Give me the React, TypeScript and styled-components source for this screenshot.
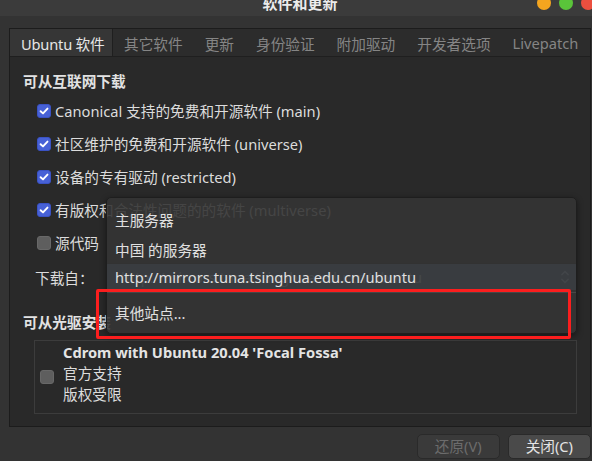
import { createGlobalStyle, styled } from "styled-components";

const GlobalStyle = createGlobalStyle`
  body {
    margin: 0;
    background: #333333;
    overflow: hidden;
    font-family: "Noto Sans", "Noto Sans CJK SC", sans-serif;
    font-size: 14.67px;
    color: #dcdcdc;
  }
  * {
    box-sizing: border-box;
  }
`;

const Window = styled.div`
  position: relative;
  width: 600px;
  height: 461px;
  background: #333333;
  display: flex;
  flex-direction: column;
  overflow: hidden;
`;

const TitleBar = styled.header`
  flex: none;
  height: 16px;
  background: #3b3b3b;
  display: grid;
  grid-template-columns: 1fr auto 1fr;
  align-items: start;
  overflow: hidden;
`;

const Title = styled.div`
  grid-column: 2;
  margin-top: -6px;
  font-size: 15px;
  line-height: 18px;
  font-weight: bold;
  color: #ececec;
`;

const Controls = styled.div`
  grid-column: 3;
  justify-self: end;
  display: flex;
  gap: 8px;
  margin-top: -4px;
  margin-right: 5px;
`;

const Dot = styled.span<{ $color: string }>`
  width: 14px;
  height: 14px;
  border-radius: 50%;
  background: ${(p) => p.$color};
`;

const Body = styled.main`
  flex: 1;
  display: flex;
  flex-direction: column;
  padding: 12px 9px 0;
`;

const Notebook = styled.section`
  height: 399px;
  border: 1px solid #1c1c1c;
  display: flex;
  flex-direction: column;
  background: #292929;
`;

const TabBar = styled.nav`
  flex: none;
  height: 28px;
  display: flex;
  background: #2c2c2c;
  border-bottom: 1px solid #1f1f1f;
  white-space: nowrap;
  overflow: hidden;
`;

const Tab = styled.div<{ $active?: boolean }>`
  flex: none;
  display: flex;
  align-items: center;
  padding: 1px 11px 0;
  width: ${(p) => (p.$active ? "103px" : "auto")};
  color: ${(p) => (p.$active ? "#e6e6e6" : "#858585")};
  background: ${(p) => (p.$active ? "#363636" : "transparent")};
  border-right: ${(p) => (p.$active ? "1px solid #1f1f1f" : "none")};
  letter-spacing: ${(p) => (p.$active ? "-0.2px" : "0")};
`;

const Panel = styled.div`
  flex: 1;
  display: flex;
  flex-direction: column;
  padding: 13px 13px 0 13px;
`;

const Heading = styled.div<{ $top?: number }>`
  line-height: 22px;
  font-weight: bold;
  color: #e2e2e2;
  margin-top: ${(p) => p.$top ?? 0}px;
  margin-bottom: 2px;
`;

const CheckRow = styled.label`
  height: 33px;
  display: flex;
  align-items: center;
  gap: 4px;
  padding-left: 14px;
  white-space: nowrap;
`;

const Box = styled.span<{ $checked?: boolean }>`
  flex: none;
  width: 14px;
  height: 14px;
  border-radius: 3px;
  display: flex;
  align-items: center;
  justify-content: center;
  background: ${(p) => (p.$checked ? "#4761d6" : "#5e5e5e")};
  border: 1px solid ${(p) => (p.$checked ? "#3a52c4" : "#686868")};
`;

const SourceRow = styled.div`
  height: 36px;
  display: flex;
  align-items: center;
  padding-left: 12px;
`;

const SourceLabel = styled.span`
  width: 71px;
  flex: none;
`;

const Combo = styled.div`
  flex: 1;
  height: 28px;
  display: flex;
  align-items: center;
  justify-content: space-between;
  padding: 0 6px 0 14px;
  background: #343434;
  border: 1px solid #1f1f1f;
  border-radius: 4px;
`;

const CdFrame = styled.div`
  margin: 5px 0 0 11px;
  height: 74px;
  border: 1px solid #3c3c3c;
  display: flex;
  align-items: center;
  gap: 9px;
  padding-left: 5px;
`;

const CdLines = styled.div`
  align-self: flex-start;
  padding-top: 1px;
  display: flex;
  flex-direction: column;
`;

const CdLine = styled.div<{ $bold?: boolean }>`
  height: 21px;
  line-height: 21px;
  font-weight: ${(p) => (p.$bold ? "bold" : "normal")};
  color: ${(p) => (p.$bold ? "#e4e4e4" : "#dcdcdc")};
`;

const Footer = styled.footer`
  display: flex;
  justify-content: flex-end;
  gap: 8px;
  padding-top: 7px;
`;

const Button = styled.button<{ $disabled?: boolean }>`
  height: 25px;
  padding: 0 17px;
  border-radius: 5px;
  font: inherit;
  line-height: 23px;
  border: 1px solid #2a2a2a;
  background: ${(p) => (p.$disabled ? "#3a3a3a" : "#4a4a4a")};
  color: ${(p) => (p.$disabled ? "#6c6c6c" : "#e4e4e4")};
`;

const Popup = styled.div`
  position: absolute;
  left: 106px;
  top: 197px;
  width: 471px;
  height: 137px;
  padding-top: 7px;
  background: rgba(52, 52, 52, 0.9);
  border: 1px solid #1e1e1e;
  border-radius: 5px;
  box-shadow: 0 2px 6px rgba(0, 0, 0, 0.45);
  display: flex;
  flex-direction: column;
`;

const MenuItem = styled.div<{ $h: number; $hover?: boolean }>`
  height: ${(p) => p.$h}px;
  display: flex;
  align-items: center;
  padding-left: 8px;
  color: #e0e0e0;
  background: ${(p) => (p.$hover ? "rgba(70, 76, 88, 0.35)" : "transparent")};
`;

const Separator = styled.div`
  height: 1px;
  margin-top: 2px;
  background: #474747;
`;

const Highlight = styled.div`
  position: absolute;
  left: 96px;
  top: 289px;
  width: 475px;
  height: 50px;
  border: 3px solid #fb1e1e;
  border-radius: 2px;
`;

function Check({ checked }: { checked?: boolean }) {
  return (
    <Box $checked={checked}>
      {checked && (
        <svg width="10" height="10" viewBox="0 0 10 10">
          <path
            d="M1.6 5.2 L4 7.4 L8.5 2.6"
            fill="none"
            stroke="#ffffff"
            strokeWidth="1.9"
            strokeLinecap="round"
            strokeLinejoin="round"
          />
        </svg>
      )}
    </Box>
  );
}

const tabs = ["Ubuntu 软件", "其它软件", "更新", "身份验证", "附加驱动", "开发者选项", "Livepatch"];

const sources = [
  { text: "Canonical 支持的免费和开源软件 (main)", checked: true },
  { text: "社区维护的免费和开源软件 (universe)", checked: true },
  { text: "设备的专有驱动 (restricted)", checked: true },
  { text: "有版权和合法性问题的的软件 (multiverse)", checked: true },
  { text: "源代码", checked: false },
];

export default function App() {
  return (
    <>
      <GlobalStyle />
      <Window>
        <TitleBar>
          <Title>软件和更新</Title>
          <Controls>
            <Dot $color="#f4a51f" />
            <Dot $color="#5ac43a" />
            <Dot $color="#ec4f3f" />
          </Controls>
        </TitleBar>
        <Body>
          <Notebook>
            <TabBar>
              {tabs.map((t, i) => (
                <Tab key={t} $active={i === 0}>
                  {t}
                </Tab>
              ))}
            </TabBar>
            <Panel>
              <Heading>可从互联网下载</Heading>
              {sources.map((s) => (
                <CheckRow key={s.text}>
                  <Check checked={s.checked} />
                  {s.text}
                </CheckRow>
              ))}
              <SourceRow>
                <SourceLabel>下载自：</SourceLabel>
                <Combo>
                  <span>http://mirrors.tuna.tsinghua.edu.cn/ubuntu</span>
                  <svg width="10" height="16" viewBox="0 0 10 16">
                    <path
                      d="M1.5 6 L5 2.5 L8.5 6 M1.5 10 L5 13.5 L8.5 10"
                      fill="none"
                      stroke="#bbbbbb"
                      strokeWidth="1.3"
                    />
                  </svg>
                </Combo>
              </SourceRow>
              <Heading $top={16}>可从光驱安装</Heading>
              <CdFrame>
                <Check />
                <CdLines>
                  <CdLine $bold>Cdrom with Ubuntu 20.04 'Focal Fossa'</CdLine>
                  <CdLine>官方支持</CdLine>
                  <CdLine>版权受限</CdLine>
                </CdLines>
              </CdFrame>
            </Panel>
          </Notebook>
          <Footer>
            <Button $disabled>还原(V)</Button>
            <Button>关闭(C)</Button>
          </Footer>
        </Body>
        <Popup>
          <MenuItem $h={29}>主服务器</MenuItem>
          <MenuItem $h={30}>中国 的服务器</MenuItem>
          <MenuItem $h={26} $hover>
            http://mirrors.tuna.tsinghua.edu.cn/ubuntu
          </MenuItem>
          <Separator />
          <MenuItem $h={38}>其他站点...</MenuItem>
        </Popup>
        <Highlight />
      </Window>
    </>
  );
}
